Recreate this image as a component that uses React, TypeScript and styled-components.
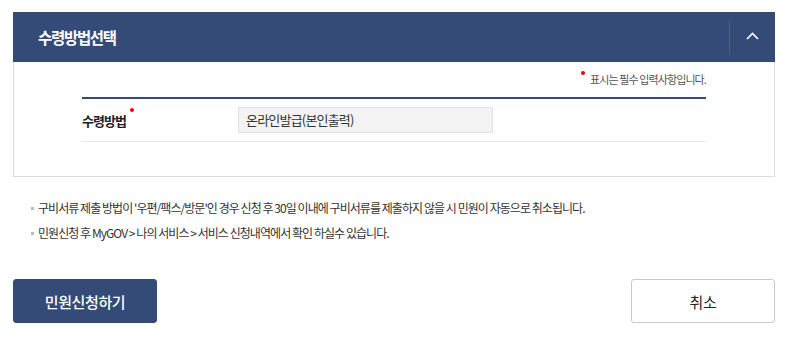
import React from 'react';
import styled, { createGlobalStyle } from 'styled-components';

const navy = '#344b77';

const notices = [
  "구비서류 제출 방법이 '우편/팩스/방문'인 경우 신청 후 30일 이내에 구비서류를 제출하지 않을 시 민원이 자동으로 취소됩니다.",
  '민원신청 후 MyGOV > 나의 서비스 > 서비스 신청내역에서 확인 하실수 있습니다.',
];

const App: React.FC = () => {
  return (
    <>
      <GlobalStyle />
      <Page>
        <Section>
          <SectionHeader>
            <SectionTitle>수령방법선택</SectionTitle>
            <ToggleButton type="button" aria-label="접기">
              <svg width="13" height="8" viewBox="0 0 13 8" fill="none">
                <polyline points="1,7 6.5,1.5 12,7" stroke="#fff" strokeWidth="1.6" />
              </svg>
            </ToggleButton>
          </SectionHeader>
          <SectionBody>
            <RequiredNote>
              <RequiredDot />
              표시는 필수 입력사항입니다.
            </RequiredNote>
            <FormTable>
              <FormRow>
                <FormLabel>
                  수령방법
                  <LabelDot />
                </FormLabel>
                <FormValue>
                  <ReadonlyInput>온라인발급(본인출력)</ReadonlyInput>
                </FormValue>
              </FormRow>
            </FormTable>
          </SectionBody>
        </Section>

        <NoticeList>
          {notices.map((text, i) => (
            <NoticeItem key={i}>{text}</NoticeItem>
          ))}
        </NoticeList>

        <ButtonRow>
          <Button primary>민원신청하기</Button>
          <Button>취소</Button>
        </ButtonRow>
      </Page>
    </>
  );
};

const GlobalStyle = createGlobalStyle`
  body {
    margin: 0;
    background: #fff;
    font-family: 'Noto Sans CJK KR', 'Noto Sans', sans-serif;
    color: #333;
  }
`;

const Page = styled.div`
  padding: 12px 25px 0 13px;
`;

const Section = styled.section``;

const SectionHeader = styled.div`
  display: flex;
  align-items: center;
  justify-content: space-between;
  height: 50px;
  padding-left: 25px;
  background: ${navy};
`;

const SectionTitle = styled.h2`
  margin: 0;
  color: #fff;
  font-size: 15.5px;
  font-weight: 700;
  letter-spacing: -1.3px;
`;

const ToggleButton = styled.button`
  display: flex;
  align-items: center;
  justify-content: center;
  width: 46px;
  height: 34px;
  padding: 0 0 2px;
  border: 0;
  border-left: 1px solid rgba(255, 255, 255, 0.12);
  background: transparent;
  cursor: pointer;
`;

const SectionBody = styled.div`
  padding: 8px 68px 34px;
  border: 1px solid #ddd;
  border-top: 0;
`;

const RequiredNote = styled.p`
  display: flex;
  justify-content: flex-end;
  align-items: flex-start;
  margin: 0 0 9px;
  height: 18px;
  line-height: 18px;
  font-size: 11px;
  color: #555;
  letter-spacing: -0.9px;
`;

const RequiredDot = styled.span`
  width: 4px;
  height: 4px;
  margin: 1px 5px 0 0;
  border-radius: 50%;
  background: #f00;
`;

const FormTable = styled.div`
  border-top: 2px solid ${navy};
`;

const FormRow = styled.div`
  display: flex;
  align-items: center;
  height: 42px;
  border-bottom: 1px solid #e8e8e8;
`;

const FormLabel = styled.div`
  position: relative;
  width: 156px;
  font-size: 13px;
  font-weight: 700;
  color: #222;
  letter-spacing: -1px;
`;

const LabelDot = styled.span`
  position: absolute;
  top: -3px;
  left: 48px;
  width: 4px;
  height: 4px;
  border-radius: 50%;
  background: #f00;
`;

const FormValue = styled.div`
  flex: 1;
`;

const ReadonlyInput = styled.div`
  box-sizing: border-box;
  width: 255px;
  height: 26px;
  padding: 0 7px;
  line-height: 24px;
  border: 1px solid #e2e2e2;
  background: #f3f3f3;
  font-size: 13px;
  color: #333;
  letter-spacing: -0.8px;
`;

const NoticeList = styled.ul`
  list-style: none;
  margin: 21px 0 0;
  padding: 0 0 0 25px;
`;

const NoticeItem = styled.li`
  position: relative;
  line-height: 20px;
  font-size: 12px;
  color: #333;
  letter-spacing: -0.95px;

  & + & {
    margin-top: 5px;
  }

  &::before {
    content: '';
    position: absolute;
    left: -7px;
    top: 9px;
    width: 3px;
    height: 3px;
    background: #bbb;
  }
`;

const ButtonRow = styled.div`
  display: flex;
  justify-content: space-between;
  margin-top: 36px;
`;

const Button = styled.button<{ primary?: boolean }>`
  width: 144px;
  height: 44px;
  border-radius: 3px;
  border: 1px solid ${p => (p.primary ? navy : '#c9c9c9')};
  background: ${p => (p.primary ? navy : '#fff')};
  color: ${p => (p.primary ? '#fff' : '#222')};
  font-family: 'Noto Sans CJK KR', 'Noto Sans', sans-serif;
  font-size: 15px;
  font-weight: ${p => (p.primary ? 500 : 400)};
  letter-spacing: -0.4px;
  cursor: pointer;
`;

export default App;
